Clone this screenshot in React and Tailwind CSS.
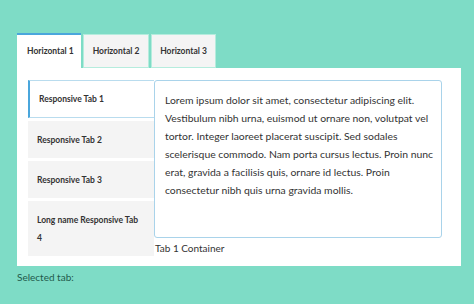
export default function App() {
  const vtabs = [
    { label: "Responsive Tab 1", h: "h-[38px]" },
    { label: "Responsive Tab 2", h: "h-[37px]" },
    { label: "Responsive Tab 3", h: "h-[37px]" },
    { label: "Long name Responsive Tab 4", h: "h-[55px]" },
  ];

  return (
    <div
      className="w-[474px] h-[304px] bg-[#7edcc6] pl-[17px] pt-[33px] text-[#333]"
      style={{ fontFamily: "Lato, 'Noto Sans', sans-serif" }}
    >
      {/* horizontal tabs */}
      <div className="flex items-end gap-[2px]">
        <div className="w-[64px] h-[35px] bg-white border-t-2 border-[#4aa6dc] flex items-center pl-[10px] text-[8.5px] font-bold">
          Horizontal 1
        </div>
        <div className="w-[66px] h-[34px] bg-[#f4f4f4] border border-[#b5ecdd] flex items-center justify-center text-[8.5px] font-bold">
          Horizontal 2
        </div>
        <div className="w-[65px] h-[34px] bg-[#f4f4f4] border border-[#b5ecdd] flex items-center justify-center text-[8.5px] font-bold">
          Horizontal 3
        </div>
      </div>

      {/* panel */}
      <div className="w-[444px] h-[198px] bg-white pl-[11px] pt-[12px] flex">
        <div className="w-[126px] flex flex-col gap-[3px]">
          {vtabs.map((t, i) =>
            i === 0 ? (
              <div
                key={t.label}
                className={`${t.h} bg-white border-y border-[#b9dcee] border-l-2 border-l-[#4aa6dc] flex items-center pl-[9px] text-[8.5px] font-bold`}
              >
                {t.label}
              </div>
            ) : (
              <div
                key={t.label}
                className={`${t.h} bg-[#f4f4f4] flex items-center pl-[9px] pr-[14px] text-[8.5px] font-bold leading-[18px]`}
              >
                {t.label}
              </div>
            )
          )}
        </div>
        <div className="flex flex-col">
          <div className="w-[288px] h-[158px] border border-[#a9d3ea] rounded-[3px] pl-[10px] pr-[3px] pt-[10px] text-[10.4px] leading-[18px]">
            Lorem ipsum dolor sit amet, consectetur adipiscing elit. Vestibulum nibh urna, euismod ut ornare non, volutpat vel tortor. Integer laoreet placerat suscipit. Sed sodales scelerisque commodo. Nam porta cursus lectus. Proin nunc erat, gravida a facilisis quis, ornare id lectus. Proin consectetur nibh quis urna gravida mollis.
          </div>
          <div className="text-[10px] leading-[18px] pt-[1px] pl-[1px]">Tab 1 Container</div>
        </div>
      </div>

      <div className="text-[10px] text-[#1f5a4c] pt-[4px] leading-[14px]">Selected tab:</div>
    </div>
  );
}
